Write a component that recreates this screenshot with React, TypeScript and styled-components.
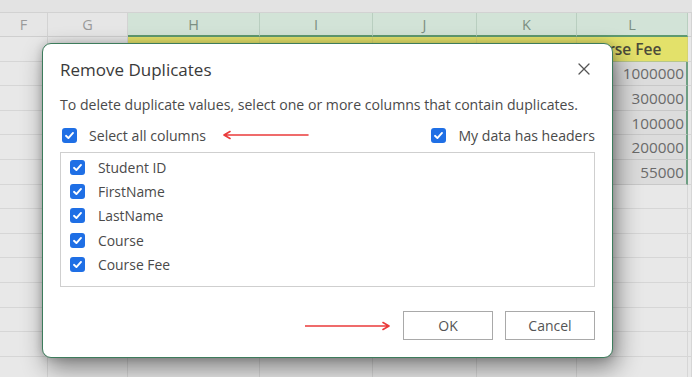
import styled, { createGlobalStyle } from 'styled-components';

const GlobalStyle = createGlobalStyle`
    html, body {
        margin: 0;
        padding: 0;
        background: #e8e8e8;
    }
    * {
        box-sizing: border-box;
    }
`;

const COLUMNS = [
    { label: 'F', width: 48, selected: false },
    { label: 'G', width: 80, selected: false },
    { label: 'H', width: 132, selected: true },
    { label: 'I', width: 113, selected: true },
    { label: 'J', width: 104, selected: true },
    { label: 'K', width: 100, selected: true },
    { label: 'L', width: 111, selected: true },
    { label: '', width: 4, selected: false },
];

const GRID = COLUMNS.map((c) => `${c.width}px`).join(' ');

const FEES = ['1000000', '300000', '100000', '200000', '55000'];

const FIELDS = ['Student ID', 'FirstName', 'LastName', 'Course', 'Course Fee'];

const Page = styled.div`
    position: relative;
    width: 692px;
    height: 377px;
    overflow: hidden;
    background: #e8e8e8;
    font-family: 'Open Sans', 'Noto Sans', sans-serif;
`;

const TopStrip = styled.div`
    height: 13px;
    background: #e3e3e3;
    border-bottom: 1px solid #d2d2d2;
`;

const HeaderRow = styled.div`
    display: grid;
    grid-template-columns: ${GRID};
    height: 24px;
`;

const ColHeader = styled.div<{ $selected: boolean }>`
    display: flex;
    align-items: center;
    justify-content: center;
    font-size: 14.5px;
    color: ${(p) => (p.$selected ? '#7c8f82' : '#9a9a9a')};
    background: ${(p) => (p.$selected ? '#d2e3d7' : '#e6e6e6')};
    border-right: 1px solid ${(p) => (p.$selected ? '#b9cfc0' : '#d3d3d3')};
    border-bottom: ${(p) => (p.$selected ? '2px solid #5f9a70' : '1px solid #cfcfcf')};
`;

const SheetRow = styled.div`
    display: grid;
    grid-template-columns: ${GRID};
    height: 24.6px;
`;

const Cell = styled.div<{ $tone: 'plain' | 'header' | 'value' }>`
    display: flex;
    align-items: center;
    justify-content: flex-end;
    padding-right: 2px;
    font-size: 15.3px;
    border-right: 1px solid #d6d6d6;
    border-bottom: 1px solid #d6d6d6;
    color: #6a6a6a;
    background: ${(p) =>
        p.$tone === 'header' ? '#e3e16a' : p.$tone === 'value' ? '#dcdcdc' : '#e8e8e8'};
    ${(p) =>
        p.$tone === 'header' &&
        `
        justify-content: flex-start;
        padding-left: 2px;
        font-weight: 600;
        color: #4b4b3a;
        font-size: 15.5px;
        border-right-color: #d6d470;
        border-bottom-color: #b7c68a;
    `}
    ${(p) =>
        p.$tone === 'value' &&
        `
        border-left: 1px solid #6e9f83;
        border-right: 2px solid #6e9f83;
        border-bottom-color: #c8c8c8;
    `}
`;

const Dialog = styled.div`
    position: absolute;
    left: 42px;
    top: 43px;
    width: 571px;
    height: 315px;
    background: #ffffff;
    border: 1px solid #3d7c5c;
    border-radius: 9px;
    box-shadow: 4px 10px 24px rgba(0, 0, 0, 0.45), 0 0 8px rgba(0, 0, 0, 0.18);
    padding: 12px 17px 0 17px;
    display: flex;
    flex-direction: column;
    color: #444444;
`;

const TitleBar = styled.div`
    display: flex;
    align-items: center;
    justify-content: space-between;
    height: 26px;
`;

const Title = styled.h1`
    margin: 0;
    font-size: 17px;
    font-weight: 400;
    color: #3a3a3a;
`;

const CloseButton = styled.button`
    border: none;
    background: none;
    padding: 0;
    margin-right: 4px;
    width: 14px;
    height: 14px;
    display: flex;
    align-items: center;
    justify-content: center;
    cursor: pointer;
`;

const Description = styled.p`
    margin: 13px 0 0 0;
    font-size: 14.1px;
    color: #4a4a4a;
    white-space: nowrap;
`;

const OptionsRow = styled.div`
    display: flex;
    align-items: center;
    justify-content: space-between;
    margin-top: 9px;
    height: 24px;
`;

const Option = styled.label`
    display: flex;
    align-items: center;
    gap: 12px;
    font-size: 14.1px;
    color: #4a4a4a;
    padding-left: 2px;
`;

const Box = styled.span`
    width: 15px;
    height: 15px;
    border-radius: 3px;
    background: #1f6fe5;
    display: flex;
    align-items: center;
    justify-content: center;
    flex-shrink: 0;
`;

const ArrowWrap = styled.span`
    display: flex;
    margin-left: 5px;
`;

const ColumnList = styled.div`
    margin-top: 5px;
    height: 135px;
    border: 1px solid #cfcfcf;
    padding: 2px 0 0 9px;
    display: flex;
    flex-direction: column;
`;

const ListItem = styled.label`
    display: flex;
    align-items: center;
    gap: 13px;
    height: 24.4px;
    font-size: 13.9px;
    color: #4a4a4a;
`;

const Footer = styled.div`
    display: flex;
    align-items: center;
    justify-content: flex-end;
    gap: 12px;
    margin-top: 24px;
`;

const Button = styled.button`
    width: 90px;
    height: 29px;
    background: #ffffff;
    border: 1px solid #a9a9a9;
    font-family: inherit;
    font-size: 14px;
    color: #555555;
    padding: 0;
`;

function Check() {
    return (
        <Box>
            <svg width="11" height="11" viewBox="0 0 11 11">
                <path
                    d="M2 5.8 L4.4 8.1 L9 2.9"
                    fill="none"
                    stroke="#ffffff"
                    strokeWidth="1.9"
                    strokeLinecap="round"
                    strokeLinejoin="round"
                />
            </svg>
        </Box>
    );
}

function RedArrow({ direction }: { direction: 'left' | 'right' }) {
    const d =
        direction === 'left'
            ? 'M1 5 L85 5 M1 5 L7 1.5 M1 5 L7 8.5'
            : 'M0 5 L84 5 M84 5 L78 1.5 M84 5 L78 8.5';
    return (
        <svg width="86" height="10" viewBox="0 0 86 10">
            <path d={d} fill="none" stroke="#ea3b3b" strokeWidth="1.6" strokeLinecap="round" />
        </svg>
    );
}

export default function App() {
    return (
        <>
            <GlobalStyle />
            <Page>
                <TopStrip />
                <HeaderRow>
                    {COLUMNS.map((col, i) => (
                        <ColHeader key={i} $selected={col.selected}>
                            {col.label}
                        </ColHeader>
                    ))}
                </HeaderRow>
                {Array.from({ length: 14 }).map((_, row) => (
                    <SheetRow key={row}>
                        {COLUMNS.map((col, i) => {
                            const isL = col.label === 'L';
                            if (row === 0 && col.selected) {
                                return (
                                    <Cell key={i} $tone="header">
                                        {isL ? 'Course Fee' : ''}
                                    </Cell>
                                );
                            }
                            if (isL && row >= 1 && row <= FEES.length) {
                                return (
                                    <Cell key={i} $tone="value">
                                        {FEES[row - 1]}
                                    </Cell>
                                );
                            }
                            return <Cell key={i} $tone="plain" />;
                        })}
                    </SheetRow>
                ))}

                <Dialog role="dialog" aria-label="Remove Duplicates">
                    <TitleBar>
                        <Title>Remove Duplicates</Title>
                        <CloseButton aria-label="Close">
                            <svg width="12" height="12" viewBox="0 0 12 12">
                                <path
                                    d="M1 1 L11 11 M11 1 L1 11"
                                    stroke="#555"
                                    strokeWidth="1.3"
                                    strokeLinecap="round"
                                />
                            </svg>
                        </CloseButton>
                    </TitleBar>
                    <Description>
                        To delete duplicate values, select one or more columns that contain
                        duplicates.
                    </Description>
                    <OptionsRow>
                        <Option>
                            <Check />
                            Select all columns
                            <ArrowWrap>
                                <RedArrow direction="left" />
                            </ArrowWrap>
                        </Option>
                        <Option>
                            <Check />
                            My data has headers
                        </Option>
                    </OptionsRow>
                    <ColumnList>
                        {FIELDS.map((field) => (
                            <ListItem key={field}>
                                <Check />
                                {field}
                            </ListItem>
                        ))}
                    </ColumnList>
                    <Footer>
                        <ArrowWrap>
                            <RedArrow direction="right" />
                        </ArrowWrap>
                        <Button>OK</Button>
                        <Button>Cancel</Button>
                    </Footer>
                </Dialog>
            </Page>
        </>
    );
}
